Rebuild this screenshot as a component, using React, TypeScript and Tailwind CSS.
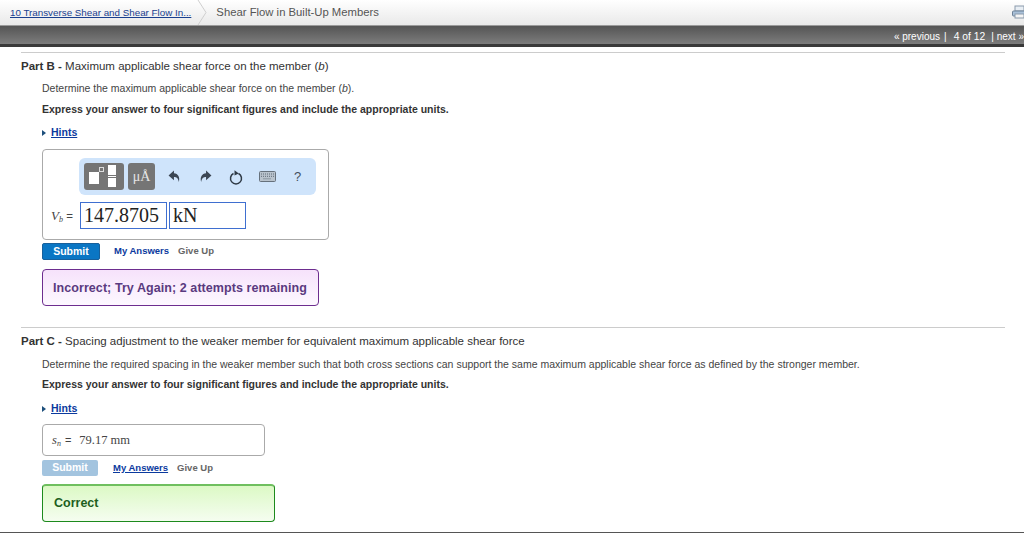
const PartHeading = ({ part, title, italic }: { part: string; title: string; italic?: string }) => (
  <div className="h-[16px] pl-[21px] text-[11.5px] leading-[16px] text-[#333]">
    <span className="font-bold">{part} - </span>
    {title}
    {italic && (
      <>
        {" "}(<i>{italic}</i>)
      </>
    )}
  </div>
);

const Hints = () => (
  <div className="flex items-center h-[14px] text-[10.5px] font-bold text-[#0b3a9e]">
    <span className="w-0 h-0 border-y-[3.5px] border-y-transparent border-l-[4px] border-l-[#1d4f7c] mr-[5px]" />
    <span className="underline">Hints</span>
  </div>
);

const Toolbar = () => (
  <div className="ml-[36px] w-[237px] h-[37px] rounded-[6px] bg-[#cfe4fb] flex items-center pl-[5px]">
    <div className="w-[40px] h-[27px] rounded-[3px] bg-[#757575] flex items-start pl-[5px]">
      <div className="w-[10px] h-[12px] bg-white mt-[9px]" />
      <div className="w-[5px] h-[5px] border border-[#ddd] mt-[4px]" />
      <div className="flex flex-col gap-[1px] mt-[2px] ml-[4px]">
        <div className="w-[8px] h-[10px] bg-white" />
        <div className="w-[8px] h-[1px] bg-white" />
        <div className="w-[8px] h-[9px] bg-white" />
      </div>
    </div>
    <div className="ml-[4px] w-[27px] h-[27px] rounded-[3px] bg-[#757575] flex items-center justify-center text-[#e6e6e6] text-[14px] font-['Liberation_Serif',serif]">
      μÅ
    </div>
    <svg className="ml-[13px]" width="13" height="13" viewBox="0 0 12 12" fill="#3b4654">
      <path d="M5.500 0.500 0.500 5 5.500 9.500V6.500c2.400 0 3.700.9 4.500 4.500 1.200-4.400-.6-7.700-4.500-8z" />
    </svg>
    <svg className="ml-[18px]" width="13" height="13" viewBox="0 0 12 12" fill="#3b4654">
      <path d="M6.500 0.500 11.500 5 6.500 9.500V6.500c-2.400 0-3.700.9-4.500 4.500-1.200-4.400.6-7.700 4.500-8z" />
    </svg>
    <svg className="ml-[17px]" width="14" height="16" viewBox="0 0 14 16" fill="none" stroke="#2f3a46" strokeWidth="1.500">
      <path d="M9.500 4.500A5.500 5.500 0 1 1 4.500 4.500" />
      <path d="M5.500 1.200 9.800 4.500 5.500 6.500z" fill="#2f3a46" stroke="none" />
    </svg>
    <svg className="ml-[16px]" width="17" height="11" viewBox="0 0 17 11">
      <rect x="0.500" y="0.500" width="16" height="10" rx="1" fill="#b9c3cd" stroke="#66717c" />
      <path d="M2 3h13M2 5.300h13M4.500 7.800h8" stroke="#5f6b77" strokeDasharray="1 1" />
    </svg>
    <span className="ml-[18px] text-[#444f5b] text-[13px] leading-none">?</span>
  </div>
);

const BoxedInput = ({ text, width }: { text: string; width: string }) => (
  <div className={`${width} h-[27px] border border-[#3f6fd0] bg-white flex items-center pl-[3px] pb-[2px] text-[20px] text-[#222] font-['Liberation_Serif',serif]`}>
    {text}
  </div>
);

export default function App() {
  return (
    <div className="w-[1024px] h-[533px] overflow-hidden bg-white font-['Liberation_Sans',Arial,sans-serif] text-[#333] flex flex-col">
      <div className="h-[25px] shrink-0 bg-gradient-to-b from-[#ffffff] to-[#e9e9e9] flex items-center relative">
        <a className="ml-[10px] pt-[1px] text-[9.8px] text-[#1a3f8f] underline">10 Transverse Shear and Shear Flow In...</a>
        <svg className="ml-[6px]" width="10" height="25" viewBox="0 0 10 25" fill="none" stroke="#cfcfcf">
          <path d="M1 0l8 12.500L1 25" />
        </svg>
        <span className="ml-[9px] text-[11.3px] text-[#555]">Shear Flow in Built-Up Members</span>
        <svg className="absolute right-0 top-[5px]" width="12" height="14" viewBox="0 0 12 14">
          <rect x="3" y="1" width="9" height="5" fill="#e8eef4" stroke="#8a9aab" />
          <rect x="0.500" y="6" width="12" height="5" rx="1" fill="#a9c0d8" stroke="#6d8197" />
          <rect x="3" y="9" width="9" height="4" fill="#f4f4f4" stroke="#8a9aab" />
        </svg>
      </div>
      <div className="h-[22px] shrink-0 bg-gradient-to-b from-[#555] to-[#7d7d7d] border-b-[3px] border-[#3a3a3a] border-t border-t-[#9a9a9a] flex items-center justify-end pt-[3px] text-[10px] text-white">
        <span>« previous</span>
        <span className="mx-[4px]">|</span>
        <span className="ml-[3px] text-[10.3px]">4 of 12</span>
        <span className="ml-[6px] mr-[3px]">|</span>
        <span className="whitespace-nowrap">next »</span>
      </div>

      <div className="ml-[21px] mr-[19px] mt-[5px] border-t border-[#ccc]" />
      <div className="mt-[5px]">
        <PartHeading part="Part B" title="Maximum applicable shear force on the member" italic="b" />
      </div>
      <div className="pl-[42px] flex flex-col">
        <div className="mt-[7px] h-[14px] text-[10.5px] leading-[14px] text-[#444]">
          Determine the maximum applicable shear force on the member (<i>b</i>).
        </div>
        <div className="mt-[7px] h-[14px] text-[10.5px] leading-[14px] font-bold">
          Express your answer to four significant figures and include the appropriate units.
        </div>
        <div className="mt-[10px]">
          <Hints />
        </div>
        <div className="mt-[9px] w-[287px] h-[91px] rounded-[4px] border border-[#aaa] pt-[8px]">
          <Toolbar />
          <div className="mt-[7px] flex items-center">
            <span className="ml-[8px] w-[29px] text-[11.5px] text-[#444]">
              <i className="font-['Liberation_Serif',serif] text-[13px]">V<sub className="text-[8px]">b</sub></i> =
            </span>
            <BoxedInput text="147.8705" width="w-[87px]" />
            <div className="w-[2px]" />
            <BoxedInput text="kN" width="w-[77px]" />
          </div>
        </div>
        <div className="mt-[3px] flex items-center">
          <div className="w-[58px] h-[17px] rounded-[2px] bg-[#0a76c4] border border-[#17609c] text-white text-[10.5px] font-bold flex items-center justify-center">
            Submit
          </div>
          <span className="ml-[14px] text-[9.500px] font-bold text-[#0b3a9e]">My Answers</span>
          <span className="ml-[9px] text-[9.500px] font-bold text-[#666]">Give Up</span>
        </div>
        <div className="mt-[9px] w-[277px] h-[37px] rounded-[4px] border border-[#6d2d8f] bg-gradient-to-b from-[#f6e2fb] to-[#fdf8ff] flex items-center pl-[10px] pt-[1px] text-[12.5px] font-bold text-[#5a3a80] tracking-[0.07px]">
          Incorrect; Try Again; 2 attempts remaining
        </div>
      </div>

      <div className="ml-[21px] mr-[19px] mt-[21px] border-t border-[#ccc]" />
      <div className="mt-[5px]">
        <PartHeading part="Part C" title="Spacing adjustment to the weaker member for equivalent maximum applicable shear force" />
      </div>
      <div className="pl-[42px] flex flex-col">
        <div className="mt-[8px] h-[14px] text-[10.5px] leading-[14px] text-[#444] whitespace-nowrap">
          Determine the required spacing in the weaker member such that both cross sections can support the same maximum applicable shear force as defined by the stronger member.
        </div>
        <div className="mt-[6px] h-[14px] text-[10.5px] leading-[14px] font-bold">
          Express your answer to four significant figures and include the appropriate units.
        </div>
        <div className="mt-[11px]">
          <Hints />
        </div>
        <div className="mt-[8px] w-[223px] h-[32px] rounded-[4px] border border-[#aaa] flex items-center pl-[9px] text-[12.5px] text-[#444] font-['Liberation_Serif',serif]">
          <i>s<sub className="text-[8px]">n</sub></i>
          <span className="ml-[4px] font-['Liberation_Sans',sans-serif] text-[11px]">=</span>
          <span className="ml-[8px]">79.17 mm</span>
        </div>
        <div className="mt-[4px] flex items-center">
          <div className="w-[56px] h-[16px] rounded-[2px] bg-[#a3c4df] text-white text-[10.5px] font-bold flex items-center justify-center">
            Submit
          </div>
          <span className="ml-[15px] text-[9.500px] font-bold text-[#0b3a9e] underline">My Answers</span>
          <span className="ml-[9px] text-[9.500px] font-bold text-[#666]">Give Up</span>
        </div>
        <div className="mt-[8px] w-[233px] h-[38px] rounded-[4px] border border-[#1d8a1d] border-t-2 border-t-[#6fbf5f] bg-gradient-to-b from-[#dcf9c5] to-[#f5fdf0] flex items-center pl-[11px] text-[12.5px] font-bold text-[#1d5f1d]">
          Correct
        </div>
      </div>
      <div className="mt-[10px] border-t border-[#555]" />
    </div>
  );
}
